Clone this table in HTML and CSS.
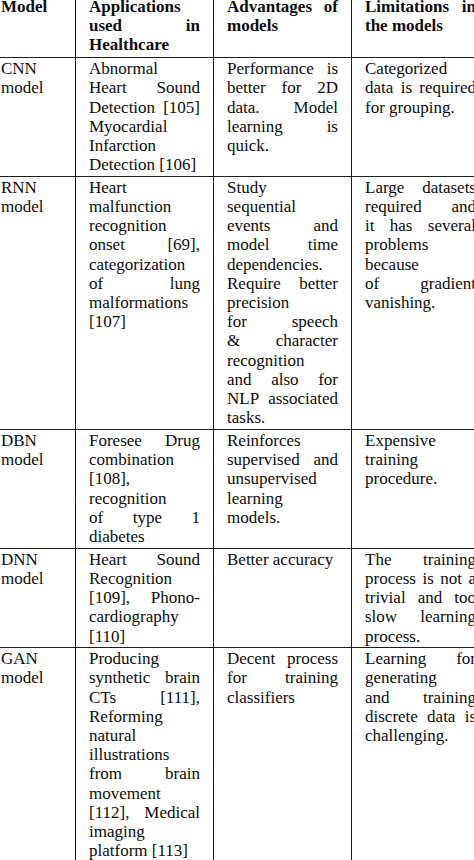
FILE: index.html
```html
<!DOCTYPE html>
<html>
<head>
<meta charset="utf-8">
<link rel="stylesheet" href="styles.css">
</head>
<body>
<table class="tbl">
<colgroup><col class="c1"><col class="c2"><col class="c3"><col class="c4"></colgroup>
<thead>
<tr>
<th><div>Model</div></th>
<th><div>Applications</div><div class="j">used in</div><div>Healthcare</div></th>
<th><div class="j">Advantages of</div><div>models</div></th>
<th><div class="j">Limitations in</div><div>the models</div></th>
</tr>
</thead>
<tbody>
<tr>
<td><div>CNN</div><div>model</div></td>
<td><div>Abnormal</div><div class="j">Heart Sound</div><div class="j">Detection [105]</div><div>Myocardial</div><div>Infarction</div><div>Detection [106]</div></td>
<td><div class="j">Performance is</div><div class="j">better for 2D</div><div class="j">data. Model</div><div class="j">learning is</div><div>quick.</div></td>
<td><div>Categorized</div><div class="j">data is required</div><div>for grouping.</div></td>
</tr>
<tr>
<td><div>RNN</div><div>model</div></td>
<td><div>Heart</div><div>malfunction</div><div>recognition</div><div class="j">onset [69],</div><div>categorization</div><div class="j">of lung</div><div>malformations</div><div>[107]</div></td>
<td><div>Study</div><div>sequential</div><div class="j">events and</div><div class="j">model time</div><div>dependencies.</div><div class="j">Require better</div><div>precision</div><div class="j">for speech</div><div class="j">&amp; character</div><div>recognition</div><div class="j">and also for</div><div class="j">NLP associated</div><div>tasks.</div></td>
<td><div class="j">Large datasets</div><div class="j">required and</div><div class="j">it has several</div><div>problems</div><div>because</div><div class="j">of gradient</div><div>vanishing.</div></td>
</tr>
<tr>
<td><div>DBN</div><div>model</div></td>
<td><div class="j">Foresee Drug</div><div>combination</div><div>[108],</div><div>recognition</div><div class="j">of type 1</div><div>diabetes</div></td>
<td><div>Reinforces</div><div class="j">supervised and</div><div>unsupervised</div><div>learning</div><div>models.</div></td>
<td><div>Expensive</div><div>training</div><div>procedure.</div></td>
</tr>
<tr>
<td><div>DNN</div><div>model</div></td>
<td><div class="j">Heart Sound</div><div>Recognition</div><div class="j">[109], Phono-</div><div>cardiography</div><div>[110]</div></td>
<td><div>Better accuracy</div></td>
<td><div class="j">The training</div><div class="j">process is not a</div><div class="j">trivial and too</div><div class="j">slow learning</div><div>process.</div></td>
</tr>
<tr>
<td><div>GAN</div><div>model</div></td>
<td><div>Producing</div><div class="j">synthetic brain</div><div class="j">CTs [111],</div><div>Reforming</div><div>natural</div><div>illustrations</div><div class="j">from brain</div><div>movement</div><div class="j">[112], Medical</div><div>imaging</div><div>platform [113]</div></td>
<td><div class="j">Decent process</div><div class="j">for training</div><div>classifiers</div></td>
<td><div class="j">Learning for</div><div>generating</div><div class="j">and training</div><div class="j">discrete data is</div><div>challenging.</div></td>
</tr>
</tbody>
</table>
</body>
</html>
```

FILE: styles.css
```css
html, body {
  margin: 0;
  padding: 0;
  background: #ffffff;
}
body {
  width: 474px;
  height: 860px;
  overflow: hidden;
  font-family: "Liberation Serif", "Times New Roman", serif;
  font-size: 17px;
  line-height: 19.2px;
  color: #0d0d0d;
}
.tbl {
  border-collapse: collapse;
  table-layout: fixed;
  width: 502px;
  margin-left: -13px;
  margin-top: -4px;
}
.c1 { width: 88px; }
.c2 { width: 138px; }
.c3 { width: 138px; }
.c4 { width: 138px; }
.tbl th,
.tbl td {
  border: 1px solid #1e1e1e;
  padding: 1px 13px 1.5px 13px;
  vertical-align: top;
  text-align: left;
  white-space: nowrap;
}
.tbl th {
  font-weight: bold;
  padding-bottom: 2.5px;
}
.tbl tr:first-child th {
  border-top: none;
}
.j {
  text-align: justify;
  text-align-last: justify;
}
```
